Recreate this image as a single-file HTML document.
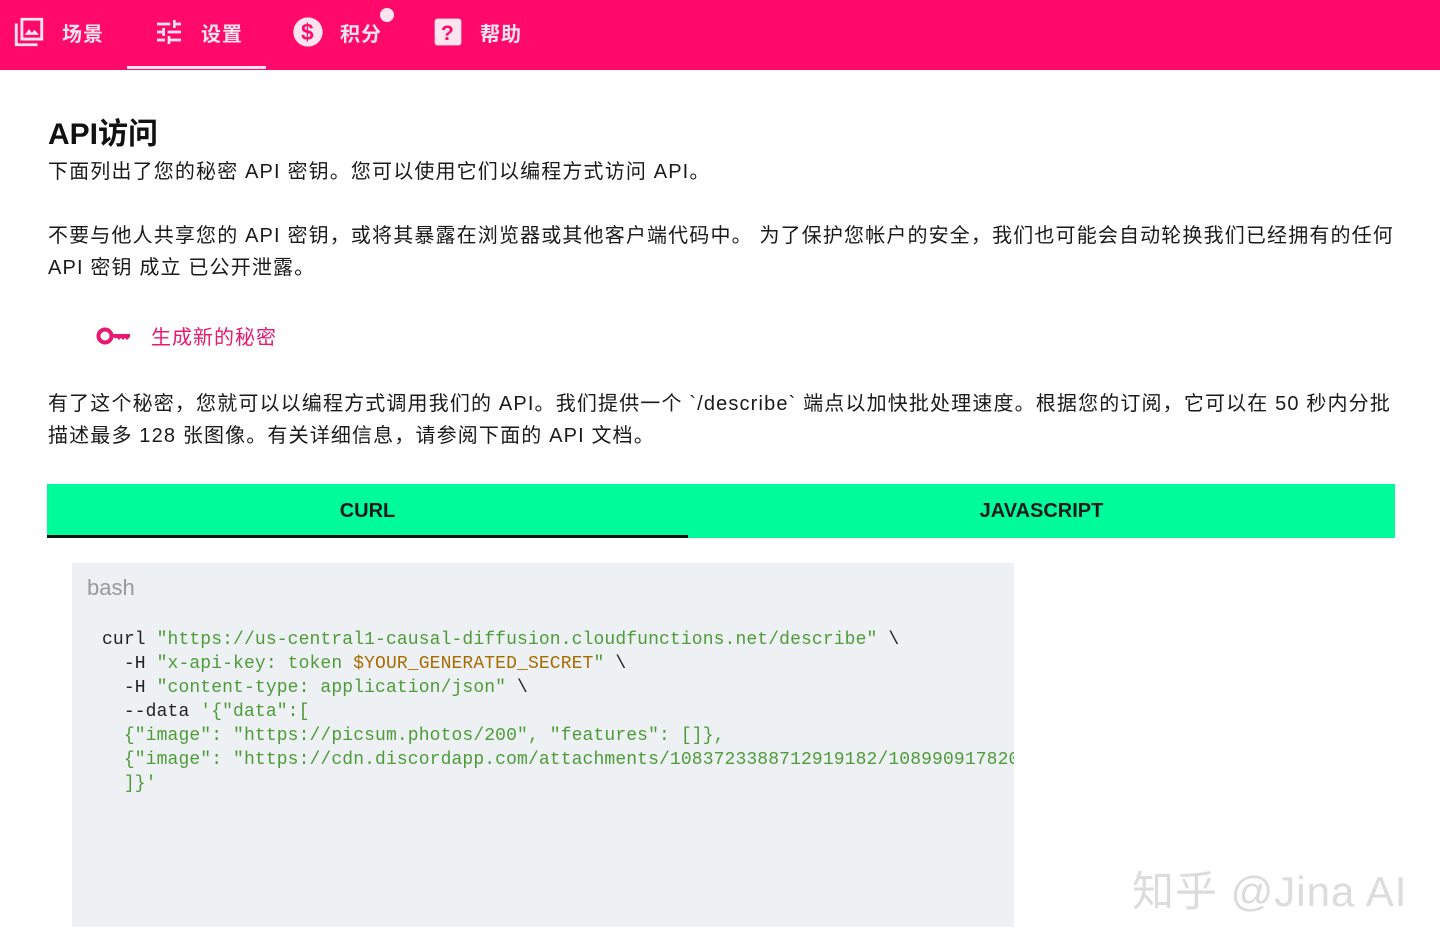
<!DOCTYPE html>
<html><head><meta charset="utf-8"><style>
*{margin:0;padding:0;box-sizing:border-box}
body{width:1440px;height:940px;overflow:hidden;background:#fff;font-family:"Liberation Sans","Noto Sans CJK SC",sans-serif;color:#1a1a1a}
.nav{height:70px;background:#ff0a6a;position:relative;color:#fde4ee}
.nav .it{position:absolute;top:-3px;height:70px;display:flex;align-items:center;font-size:20px;font-weight:bold;letter-spacing:1px}
.nav svg{margin-right:16px}
.ul{position:absolute;left:127px;top:66px;width:139px;height:3px;background:#fde4ee}
.dot{position:absolute;left:380px;top:8px;width:14px;height:14px;border-radius:50%;background:#fde4ee}
h1{position:absolute;left:48px;top:109px;font-size:30px;font-weight:bold;color:#111}
.p{position:absolute;left:48px;font-size:20px;line-height:32px;color:#1a1a1a;width:1370px;letter-spacing:1.15px}
.key{position:absolute;left:96px;top:321px;display:flex;align-items:center;color:#e8196e;font-size:20px;letter-spacing:1px}
.tabs{position:absolute;left:47px;top:484px;width:1348px;height:54px;background:#00fc9a;font-size:20px;font-weight:bold}
.tabs div{position:absolute;top:0;height:54px;line-height:54px;text-align:center}
.code{position:absolute;left:72px;top:563px;width:942px;height:364px;background:#edf1f3;overflow:hidden}
.code .lang{position:absolute;left:15px;top:12px;font-size:22px;color:#999}
pre{position:absolute;left:30px;top:65px;font-family:"Liberation Mono",monospace;font-size:18px;line-height:24px;color:#222;white-space:pre;letter-spacing:0.12px}
.g{color:#4f9a3a}.o{color:#a86b00}
.wm{position:absolute;left:1132px;top:858px;font-size:42px;color:rgba(205,205,205,0.7);letter-spacing:1px}
</style></head><body>
<div class="nav">
 <div class="it" style="left:12px"><svg width="34" height="34" viewBox="0 0 24 24"><path fill="#fde4ee" d="M2 6h2v14h14v2H2zM6 2h16v16H6zM8 4v12h12V4zM9 14l3-4 2 2.5 2-2 3 3.5z"/></svg>场景</div>
 <div class="it" style="left:153px"><svg width="32" height="32" viewBox="0 0 24 24"><path fill="#fde4ee" d="M3 17v2h6v-2zM3 5v2h10V5zm10 16v-2h8v-2h-8v-2h-2v6zM7 9v2H3v2h4v2h2V9zm14 4v-2H11v2zm-6-4h2V7h4V5h-4V3h-2z"/></svg>设置</div>
 <div class="it" style="left:292px"><svg width="32" height="32" viewBox="0 0 24 24"><circle cx="12" cy="12" r="11" fill="#fde4ee"/><text x="12" y="18" text-anchor="middle" font-size="17" font-weight="bold" fill="#ff0a6a" font-family="Liberation Sans">$</text></svg>积分</div>
 <div class="dot"></div>
 <div class="it" style="left:432px"><svg width="32" height="32" viewBox="0 0 24 24"><rect x="2" y="2" width="20" height="20" rx="2" fill="#fde4ee"/><text x="12" y="18" text-anchor="middle" font-size="16" font-weight="bold" fill="#ff0a6a" font-family="Liberation Sans">?</text></svg>帮助</div>
 <div class="ul"></div>
</div>
<h1>API访问</h1>
<div class="p" style="top:156px">下面列出了您的秘密 API 密钥。您可以使用它们以编程方式访问 API。</div>
<div class="p" style="top:220px">不要与他人共享您的 API 密钥，或将其暴露在浏览器或其他客户端代码中。 为了保护您帐户的安全，我们也可能会自动轮换我们已经拥有的任何<br>API 密钥 成立 已公开泄露。</div>
<div class="key"><svg width="36" height="28" viewBox="0 0 36 28"><circle cx="9" cy="14" r="6.5" fill="none" stroke="#e8196e" stroke-width="4"/><path fill="#e8196e" d="M15 12h19v3l-3 3-2-2-2 2-2-2-2 2-2-2-3 0z"/></svg><span style="margin-left:19px">生成新的秘密</span></div>
<div class="p" style="top:388px">有了这个秘密，您就可以以编程方式调用我们的 API。我们提供一个 `/describe` 端点以加快批处理速度。根据您的订阅，它可以在 50 秒内分批<br>描述最多 128 张图像。有关详细信息，请参阅下面的 API 文档。</div>
<div class="tabs"><div style="left:0;width:641px;border-bottom:3px solid #111">CURL</div><div style="left:641px;width:707px">JAVASCRIPT</div></div>
<div class="code"><div class="lang">bash</div>
<pre>curl <span class="g">"https://us-central1-causal-diffusion.cloudfunctions.net/describe"</span> \
  -H <span class="g">"x-api-key: token </span><span class="o">$YOUR_GENERATED_SECRET</span><span class="g">"</span> \
  -H <span class="g">"content-type: application/json"</span> \
  --data <span class="g">'{"data":[
  {"image": "https://picsum.photos/200", "features": []},
  {"image": "https://cdn.discordapp.com/attachments/1083723388712919182/10899091782024</span>
<span class="g">  ]}'</span></pre></div>
<div class="wm">知乎 @Jina AI</div>
</body></html>
